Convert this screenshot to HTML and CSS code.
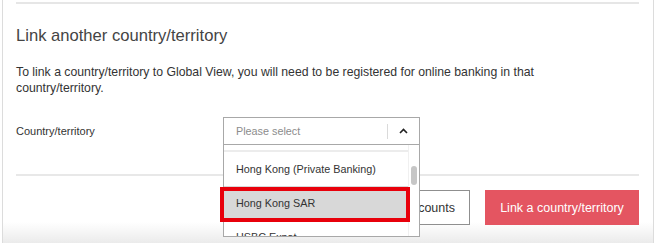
FILE: index.html
```html
<!DOCTYPE html>
<html lang="en">
<head>
<meta charset="utf-8">
<title>Link another country/territory</title>
<link rel="stylesheet" href="styles.css">
</head>
<body>
<div class="panel">
  <div class="top-rule"></div>
  <h2 class="title">Link another country/territory</h2>
  <p class="intro">To link a country/territory to Global View, you will need to be registered for online banking in that country/territory.</p>
  <div class="field">
    <label class="field-label">Country/territory</label>
    <div class="select-wrap">
      <div class="select">
        <span class="placeholder">Please select</span>
        <span class="select-divider"></span>
        <svg class="chevron" width="9" height="6" viewBox="0 0 9 6"><path d="M1 5 L4.5 1.5 L8 5" fill="none" stroke="#222" stroke-width="1.6"/></svg>
      </div>
      <div class="dropdown">
        <div class="options">
          <div class="option-prev"></div>
          <div class="option">Hong Kong (Private Banking)</div>
          <div class="option selected">Hong Kong SAR</div>
          <div class="option">HSBC Expat</div>
        </div>
        <div class="scrollbar"><div class="thumb"></div></div>
      </div>
      <div class="annotation"></div>
    </div>
  </div>
  <div class="rule"></div>
  <div class="actions">
    <button class="btn btn-secondary">View my accounts</button>
    <button class="btn btn-primary">Link a country/territory</button>
  </div>
</div>
</body>
</html>
```
FILE: styles.css
```css
* { box-sizing: border-box; }
html, body { margin: 0; padding: 0; }
body {
  font-family: "Liberation Sans", Arial, sans-serif;
  color: #333;
  background: #fff;
  width: 654px;
  height: 243px;
  overflow: hidden;
}
.panel {
  margin-left: 2px;
  width: 652px;
  height: 243px;
  border-left: 1px solid #dcdcdc;
  border-right: 1px solid #dcdcdc;
  padding: 2px 14px 0 13px;
  background: linear-gradient(to bottom, #fff 0, #fff 222px, #ebebeb 243px);
}
.top-rule {
  height: 2px;
  background: #e6e6e6;
}
.title {
  margin: 22px 0 0;
  font-size: 16.6px;
  font-weight: normal;
  line-height: 20px;
  color: #444;
}
.intro {
  margin: 18px 0 0;
  font-size: 12.25px;
  line-height: 16px;
  width: 560px;
  color: #333;
}
.field {
  display: flex;
  align-items: center;
  margin-top: 21px;
}
.field-label {
  width: 207px;
  font-size: 11px;
  color: #333;
}
.select-wrap {
  position: relative;
  width: 197px;
}
.select {
  height: 28px;
  border: 1px solid #a8a8a8;
  display: flex;
  align-items: center;
  padding: 0 11px 0 12px;
  background: #fff;
}
.placeholder {
  flex: 1;
  font-size: 10.8px;
  color: #8c8c8c;
}
.select-divider {
  width: 1px;
  height: 15px;
  background: #dadada;
  margin-right: 11px;
}
.chevron { display: block; }
.dropdown {
  position: absolute;
  left: 0;
  top: 28px;
  width: 197px;
  height: 92px;
  border: 1px solid #a8a8a8;
  border-top: none;
  background: #fff;
  display: flex;
  overflow: hidden;
  z-index: 2;
}
.options {
  flex: 1;
}
.option-prev {
  height: 7px;
  border-bottom: 2px solid #ececec;
}
.option {
  height: 34px;
  display: flex;
  align-items: center;
  padding-left: 12px;
  font-size: 10.8px;
  color: #333;
  white-space: nowrap;
}
.option.selected { background: #d8d8d8; }
.scrollbar {
  width: 11px;
  border-left: 1px solid #f0f0f0;
  position: relative;
}
.thumb {
  position: absolute;
  left: 2px;
  top: 21px;
  width: 6px;
  height: 19px;
  border-radius: 3px;
  background: #c6c6c6;
}
.annotation {
  position: absolute;
  left: -3px;
  top: 70px;
  width: 190px;
  height: 35px;
  border: 4px solid #e8000b;
  z-index: 3;
}
.rule {
  margin-top: 29px;
  height: 2px;
  background: #e8e8e8;
}
.actions {
  display: flex;
  justify-content: flex-end;
  gap: 15px;
  margin-top: 14px;
}
.btn {
  height: 35px;
  font-family: inherit;
  font-size: 12.5px;
  padding: 0 14px;
  cursor: pointer;
}
.btn-secondary {
  background: #fff;
  border: 1px solid #8f8f8f;
  color: #333;
}
.btn-primary {
  width: 154px;
  background: #e45561;
  border: 1px solid #e45561;
  color: #fff;
}
```
